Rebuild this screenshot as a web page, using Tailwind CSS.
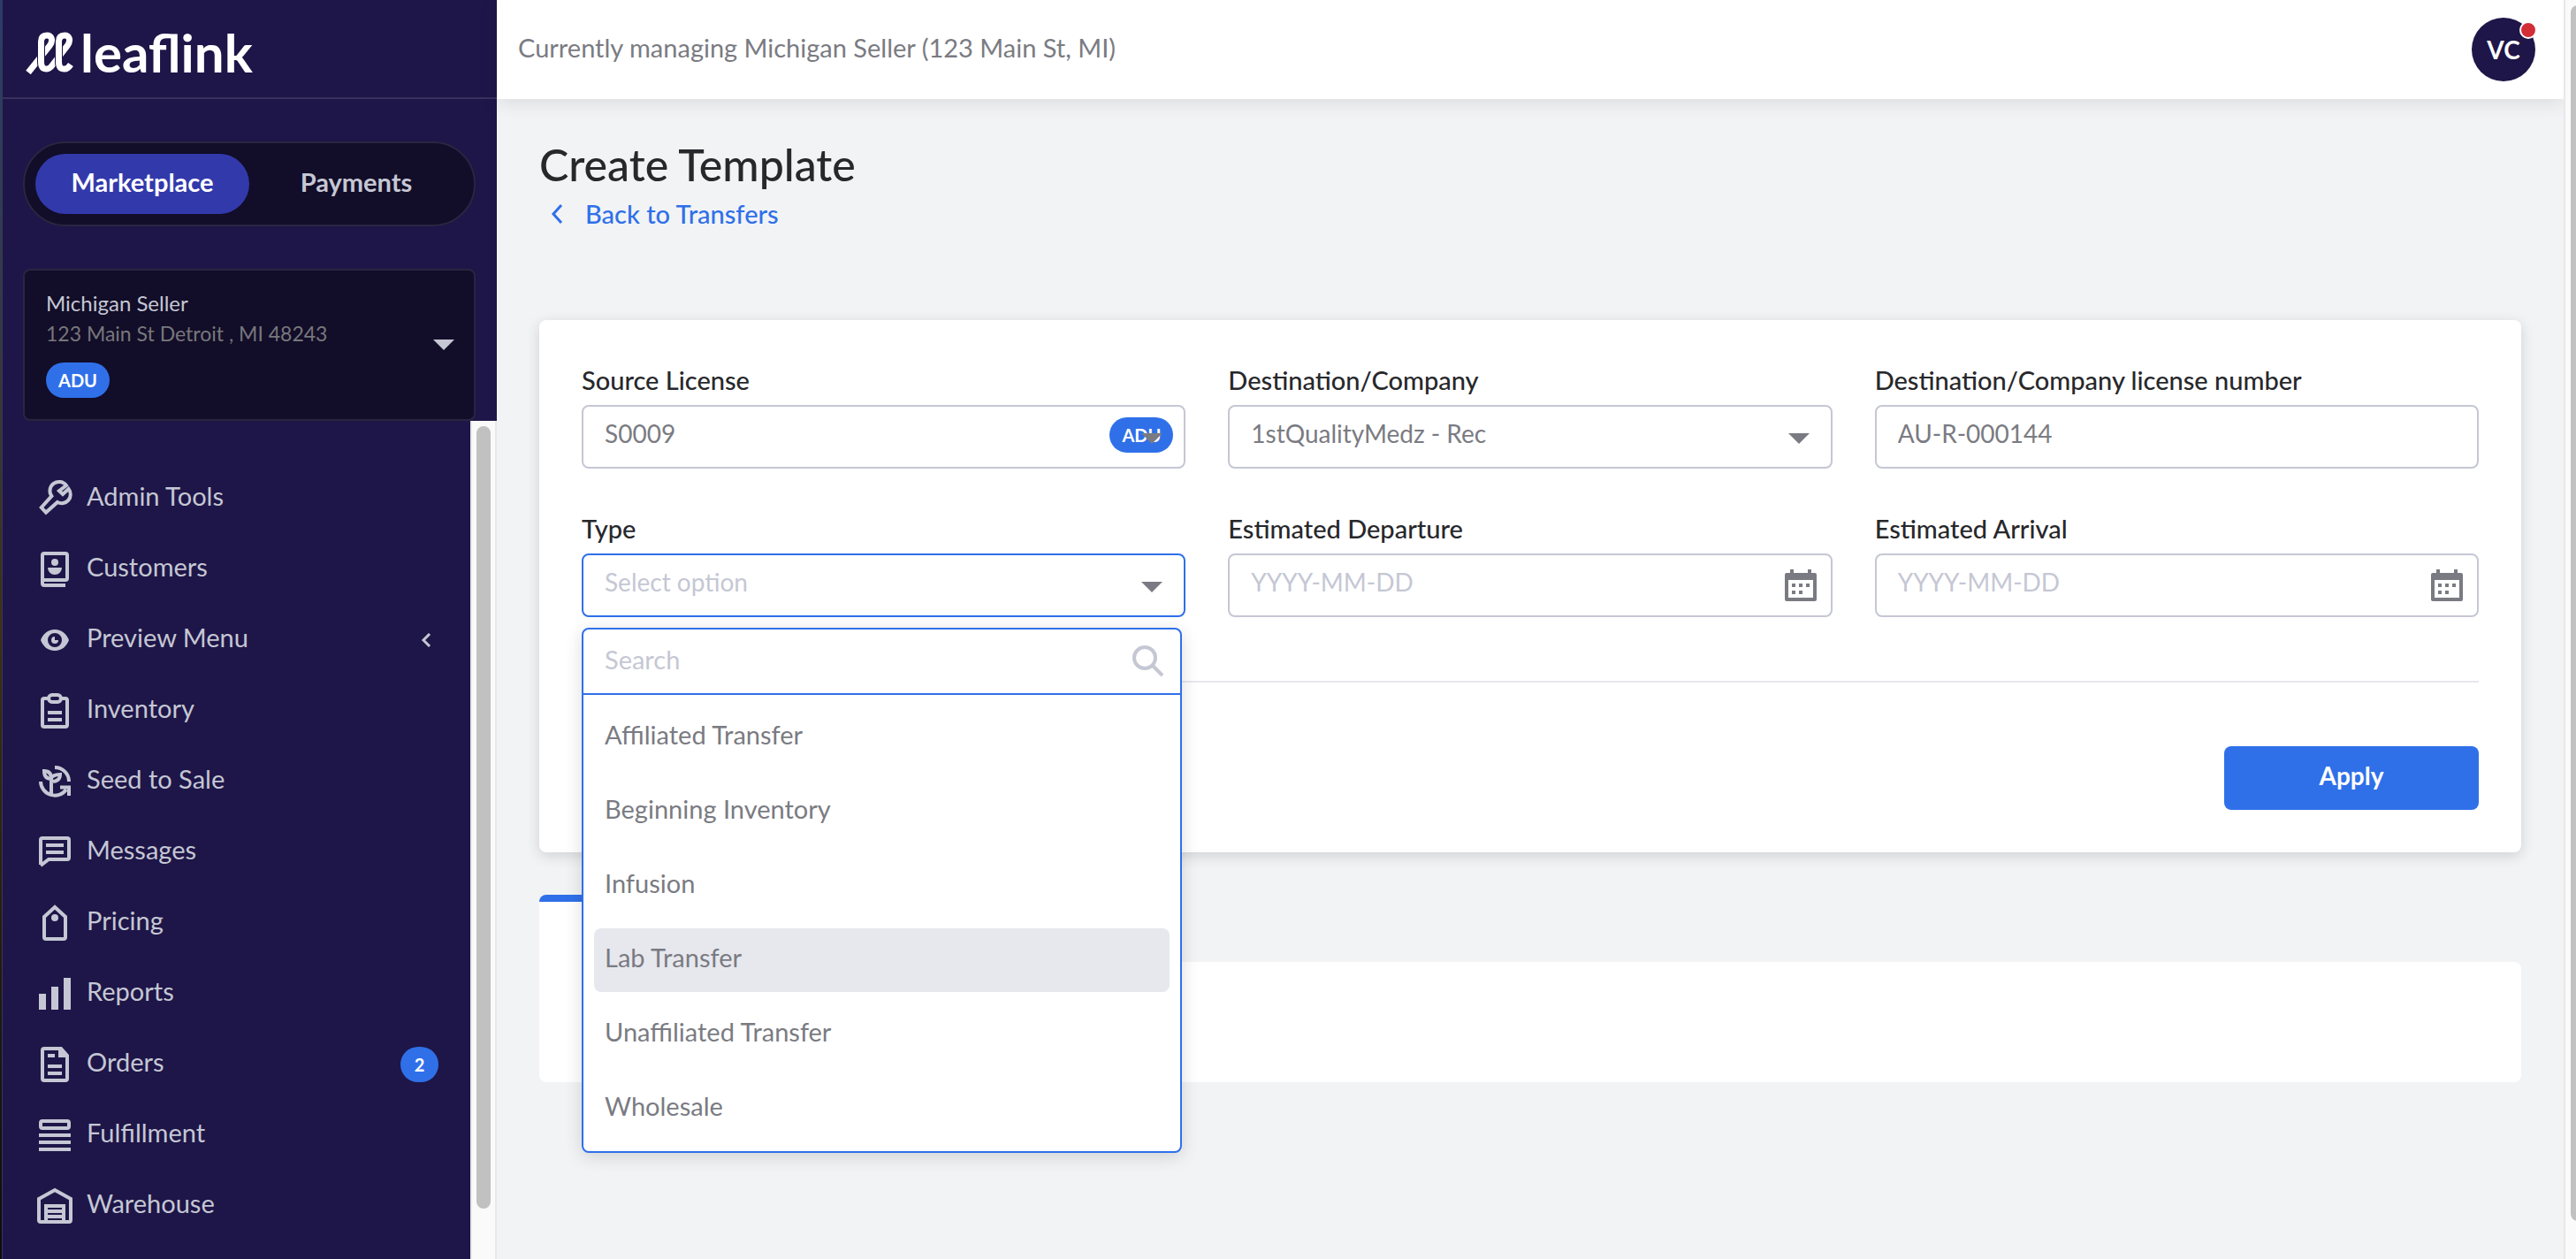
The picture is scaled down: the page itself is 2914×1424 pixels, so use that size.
<!DOCTYPE html>
<html lang="en">

<head>
  <meta charset="UTF-8">
  <meta name="viewport" content="width=device-width, initial-scale=1.0">
  <title>LeafLink - Create Template</title>
  <script src="https://cdn.jsdelivr.net/npm/@tailwindcss/browser@4"></script>
</head>

<body class="bg-[#f2f3f5] font-['Lato','Open_Sans',sans-serif] text-[29px] leading-10 text-[#27282b]">

  <div class="flex h-screen overflow-hidden">

    <!-- Sidebar -->
    <div class="w-0.5 shrink-0 bg-linear-to-b from-[#26406a] via-[#3d3010] to-[#0c0c0c]"></div>
    <aside class="flex w-[560px] shrink-0 flex-col border-l border-[#3a3560] bg-[#1e1648] text-[#c5c7d4]">
      <a href="#" class="flex h-28 items-center border-b-2 border-[#38305e] pt-2 pl-6 text-white">
        <svg class="h-[50px] w-[60px]" viewBox="28 35 60 50" fill="none" stroke="currentColor" stroke-width="7">
          <path d="M33 83 L57 53C62 46 59 41 54 41M54 79C57 79 58.500 77 60 75L77 53C82 46 79 41 74 41M74 79C77 79 79 77 81 74" />
          <path d="M54 41C49 41 47.500 44 47.500 48V71C47.500 77 50 79 54 79M74 41C69 41 67.500 44 67.500 48V71C67.500 77 70 79 74 79" stroke="#1e1648" stroke-width="9" />
          <path d="M54 41C49 41 47.500 44 47.500 48V71C47.500 77 50 79 54 79M74 41C69 41 67.500 44 67.500 48V71C67.500 77 70 79 74 79" />
        </svg>
        <span class="ml-1 text-[60px] leading-[60px] font-bold">leaflink</span>
      </a>

      <div class="pt-12 pr-6 pl-[23px]">
        <div class="flex h-24 rounded-full border-2 border-[#2a2540] bg-[#120d28] p-3 font-bold">
          <button class="w-[242px] rounded-full bg-[#3239ab] pb-1 text-white">Marketplace</button>
          <button class="flex-1 pb-1">Payments</button>
        </div>
        <button class="mt-12 flex h-[172px] w-full items-center rounded-lg border-2 border-[#2a2540] bg-[#120d28] px-6 text-left text-2xl leading-[34px]">
          <span class="flex-1 pb-1">
            <span class="block">Michigan Seller</span>
            <span class="block text-[23px] text-[#77777c]">123 Main St Detroit , MI 48243</span>
            <span class="mt-4 inline-block rounded-full bg-[#2f70e9] px-3.5 text-xl leading-10 font-bold text-white">ADU</span>
          </span>
          <svg class="-mr-0.5 h-3 w-6" viewBox="0 0 24 12" fill="currentColor"><path d="M0 0H24L12 12Z" /></svg>
        </button>
      </div>

      <div class="flex min-h-0 flex-1">
        <nav class="flex-1 overflow-hidden pt-12 pr-9 pl-[35px]">
          <a href="#" class="flex h-20 items-center">
            <svg class="h-12 w-12" viewBox="0 0 24 24" fill="none" stroke="currentColor" stroke-width="2"><path d="M18.500 4.600 A5 5 0 0 0 10.200 10.600 L4.400 17 L7 19.800 L13.500 14 A5 5 0 0 0 19.800 6.500 L16.500 9.500 L14.500 7.600 Z" /></svg>
            <span class="ml-3 pb-1.5">Admin Tools</span>
          </a>
          <a href="#" class="flex h-20 items-center">
            <svg class="h-12 w-12" viewBox="0 0 24 24" fill="none" stroke="currentColor" stroke-width="2"><rect x="5" y="3" width="14" height="15" rx="1" /><path d="M5 17V20Q5 21 6 21H18" /><circle cx="12" cy="8" r="2" fill="currentColor" stroke="none" /><path d="M8 11H16A4 4 0 0 1 8 11Z" fill="currentColor" stroke="none" /></svg>
            <span class="ml-3 pb-1.5">Customers</span>
          </a>
          <a href="#" class="flex h-20 items-center">
            <svg class="h-12 w-12" viewBox="0 0 24 24" fill="currentColor"><path fill-rule="evenodd" d="M12 6C8 6 5.300 8.500 4 12C5.300 15.500 8 18 12 18C16 18 18.700 15.500 20 12C18.700 8.500 16 6 12 6ZM12 8A4 4 0 1 1 12 16A4 4 0 1 1 12 8Z" /><path d="M12 10A2 2 0 1 0 14 12H12Z" /></svg>
            <span class="ml-3 flex-1 pb-1.5">Preview Menu</span>
            <svg class="mr-2 h-4 w-3" viewBox="0 0 12 16" fill="none" stroke="currentColor" stroke-width="3"><path d="M10 1L3 8L10 15" /></svg>
          </a>
          <a href="#" class="flex h-20 items-center">
            <svg class="h-12 w-12" viewBox="0 0 24 24" fill="none" stroke="currentColor" stroke-width="2"><path d="M8.500 5H6Q5 5 5 6V20Q5 21 6 21H18Q19 21 19 20V6Q19 5 18 5H15.500" /><rect x="8.500" y="3" width="7" height="4" rx="2" /><path d="M8 13H16M8 17H16" /></svg>
            <span class="ml-3 pb-1.5">Inventory</span>
          </a>
          <a href="#" class="flex h-20 items-center">
            <svg class="h-12 w-12" viewBox="0 0 24 24" fill="none" stroke="currentColor" stroke-width="2"><path d="M4 12A8 8 0 0 0 18.500 16.500M12 4A8 8 0 0 1 20 12M15 15.300H20V20" /><path d="M10 20V10.500C7 10.500 6 8.500 6 6C9 6 10 8 10 10.500C10 9 12 8 15 8C15 10.500 13.500 12 10 12" /></svg>
            <span class="ml-3 pb-1.5">Seed to Sale</span>
          </a>
          <a href="#" class="flex h-20 items-center">
            <svg class="h-12 w-12" viewBox="0 0 24 24" fill="none" stroke="currentColor" stroke-width="2"><path d="M4 19V5Q4 4 5 4H19Q20 4 20 5V15Q20 16 19 16H8.500L4 19.500M7 8H17M7 12H17" /></svg>
            <span class="ml-3 pb-1.5">Messages</span>
          </a>
          <a href="#" class="flex h-20 items-center">
            <svg class="h-12 w-12" viewBox="0 0 24 24" fill="none" stroke="currentColor" stroke-width="2"><path d="M6 8.500L12 3L18 8.500V20Q18 21 17 21H7Q6 21 6 20Z" /><circle cx="12" cy="9" r="2" fill="currentColor" stroke="none" /></svg>
            <span class="ml-3 pb-1.5">Pricing</span>
          </a>
          <a href="#" class="flex h-20 items-center">
            <svg class="h-12 w-12" viewBox="0 0 24 24" fill="currentColor"><path d="M3 12H7V21H3ZM10 8H14V21H10ZM17 3H21V21H17Z" /></svg>
            <span class="ml-3 pb-1.5">Reports</span>
          </a>
          <a href="#" class="flex h-20 items-center">
            <svg class="h-12 w-12" viewBox="0 0 24 24" fill="none" stroke="currentColor" stroke-width="2"><path d="M15.500 3H6Q5 3 5 4V20Q5 21 6 21H18Q19 21 19 20V7ZM8 7H12M8 13H16M8 17H16" /><path d="M14 3V8H19V7L16 3Z" fill="currentColor" stroke="none" /></svg>
            <span class="ml-3 flex-1 pb-1.5">Orders</span>
            <span class="h-10 w-[43px] rounded-full bg-[#2f70e9] text-center text-xl leading-10 font-bold text-white">2</span>
          </a>
          <a href="#" class="flex h-20 items-center">
            <svg class="h-12 w-12" viewBox="0 0 24 24" fill="none" stroke="currentColor" stroke-width="2"><rect x="4" y="4" width="16" height="4" rx="1" /><path d="M3 12H21M3 16H21M3 20H21" /></svg>
            <span class="ml-3 pb-1.5">Fulfillment</span>
          </a>
          <a href="#" class="flex h-20 items-center">
            <svg class="h-12 w-12" viewBox="0 0 24 24" fill="none" stroke="currentColor" stroke-width="2"><path d="M3 8L12 3L21 8V20Q21 21 20 21H4Q3 21 3 20Z" /><path d="M7 21V12H17V21M7 15H17M7 18H17" /></svg>
            <span class="ml-3 pb-1.5">Warehouse</span>
          </a>
        </nav>
        <div class="w-[30px] border-x-2 border-[#e8e8e8] bg-[#fafafa] px-[5px] pt-1.5">
          <div class="h-[94%] rounded-full bg-[#c1c1c1]"></div>
        </div>
      </div>
    </aside>

    <!-- Page -->
    <div class="flex min-w-0 flex-1 flex-col">
      <header class="flex h-28 shrink-0 items-center justify-between bg-white pr-8 pl-6 shadow-[0_4px_20px_rgba(0,0,0,0.1)]">
        <p class="pb-1 text-[#7a7b82]">Currently managing Michigan Seller (123 Main St, MI)</p>
        <button class="relative h-[72px] w-[72px] rounded-full bg-[#1e1648] text-[28px] font-bold text-white">VC
          <span class="absolute top-1 -right-0.5 h-5 w-5 rounded-full border-2 border-white bg-[#d32d37]"></span>
        </button>
      </header>

      <main class="px-12 pt-[42px]">
        <h1 class="text-[50px] leading-[64px] font-medium">Create Template</h1>
        <a href="#" class="mt-1 flex items-center pl-3 font-medium text-[#2f70e9]">
          <svg class="h-6 w-4" viewBox="0 0 16 24" fill="none" stroke="currentColor" stroke-width="3"><path d="M13 2L4 12L13 22" /></svg>
          <span class="ml-6">Back to Transfers</span>
        </a>

        <section class="relative z-10 mt-[100px] rounded-lg bg-white p-12 shadow-[0_4px_16px_rgba(0,0,0,0.14)]">
          <div class="grid grid-cols-3 gap-12">
            <div>
              <label for="source" class="mb-2 block font-medium">Source License</label>
              <div class="relative">
                <select id="source" class="h-[72px] w-full appearance-none rounded-lg border-2 border-[#c5c7d4] bg-white px-6 pb-2 text-[28px] text-[#7a7b82]">
                  <option>S0009</option>
                </select>
                <span class="absolute top-3.5 right-3.5 rounded-full bg-[#2f70e9] px-3.5 text-xl leading-10 font-bold text-white">ADU</span>
                <svg class="absolute top-8 right-[26px] h-3 w-6" viewBox="0 0 24 12" fill="#7a7b82"><path d="M0 0H24L12 12Z" /></svg>
              </div>
            </div>
            <div>
              <label for="destination" class="mb-2 block font-medium">Destination/Company</label>
              <div class="relative">
                <select id="destination" class="h-[72px] w-full appearance-none rounded-lg border-2 border-[#c5c7d4] bg-white px-6 pb-2 text-[28px] text-[#7a7b82]">
                  <option>1stQualityMedz - Rec</option>
                </select>
                <svg class="absolute top-8 right-[26px] h-3 w-6" viewBox="0 0 24 12" fill="#7a7b82"><path d="M0 0H24L12 12Z" /></svg>
              </div>
            </div>
            <div>
              <label for="license" class="mb-2 block font-medium">Destination/Company license number</label>
              <input id="license" type="text" value="AU-R-000144" class="block h-[72px] w-full rounded-lg border-2 border-[#c5c7d4] px-6 pb-2 text-[28px] text-[#7a7b82]">
            </div>
            <div>
              <label for="type" class="mb-2 block font-medium">Type</label>
              <div class="relative">
                <select id="type" class="h-[72px] w-full appearance-none rounded-lg border-2 border-[#2f70e9] bg-white px-6 pb-2 text-[28px] text-[#c5c7d4]">
                  <option>Select option</option>
                </select>
                <svg class="absolute top-8 right-[26px] h-3 w-6" viewBox="0 0 24 12" fill="#7a7b82"><path d="M0 0H24L12 12Z" /></svg>

                <!-- Open menu of the Type field -->
                <div class="absolute top-full right-1 left-0 mt-3 rounded-lg border-2 border-[#2f70e9] bg-white text-[#7a7b82] shadow-[0_4px_20px_rgba(0,0,0,0.14)]">
                  <div class="flex items-center border-b-2 border-[#2f70e9] pr-3.5">
                    <input type="text" aria-label="Search types" placeholder="Search" class="h-[72px] min-w-0 flex-1 px-6 pb-1.5 placeholder:text-[#c5c7d4] focus:outline-none">
                    <svg class="h-11 w-11" viewBox="0 0 44 44" fill="none" stroke="#c5c7d4" stroke-width="4"><circle cx="18" cy="18" r="12" /><path d="M27 27L38 38" /></svg>
                  </div>
                  <div class="flex flex-col gap-3 p-3">
                    <button class="h-[72px] rounded-lg px-3 pb-1.5 text-left">Affiliated Transfer</button>
                    <button class="h-[72px] rounded-lg px-3 pb-1.5 text-left">Beginning Inventory</button>
                    <button class="h-[72px] rounded-lg px-3 pb-1.5 text-left">Infusion</button>
                    <button class="h-[72px] rounded-lg bg-[#e7e8ee] px-3 pb-1.5 text-left">Lab Transfer</button>
                    <button class="h-[72px] rounded-lg px-3 pb-1.5 text-left">Unaffiliated Transfer</button>
                    <button class="h-[72px] rounded-lg px-3 pb-1.5 text-left">Wholesale</button>
                  </div>
                </div>
              </div>
            </div>
            <div>
              <label for="departure" class="mb-2 block font-medium">Estimated Departure</label>
              <div class="relative">
                <input id="departure" type="text" placeholder="YYYY-MM-DD" class="block h-[72px] w-full rounded-lg border-2 border-[#c5c7d4] px-6 pb-2 text-[28px] placeholder:text-[#c5c7d4]">
                <svg class="absolute top-3 right-3 h-12 w-12" viewBox="0 0 24 24" fill="#7a7b82"><path fill-rule="evenodd" d="M6 3H8V5H16V3H18V5H20Q21 5 21 6V20Q21 21 20 21H4Q3 21 3 20V6Q3 5 4 5H6ZM5 9V19H19V9Z" /><path d="M7 11H9V13H7ZM11 11H13V13H11ZM15 11H17V13H15ZM7 15H9V17H7ZM11 15H13V17H11Z" /></svg>
              </div>
            </div>
            <div>
              <label for="arrival" class="mb-2 block font-medium">Estimated Arrival</label>
              <div class="relative">
                <input id="arrival" type="text" placeholder="YYYY-MM-DD" class="block h-[72px] w-full rounded-lg border-2 border-[#c5c7d4] px-6 pb-2 text-[28px] placeholder:text-[#c5c7d4]">
                <svg class="absolute top-3 right-3 h-12 w-12" viewBox="0 0 24 24" fill="#7a7b82"><path fill-rule="evenodd" d="M6 3H8V5H16V3H18V5H20Q21 5 21 6V20Q21 21 20 21H4Q3 21 3 20V6Q3 5 4 5H6ZM5 9V19H19V9Z" /><path d="M7 11H9V13H7ZM11 11H13V13H11ZM15 11H17V13H15ZM7 15H9V17H7ZM11 15H13V17H11Z" /></svg>
              </div>
            </div>
          </div>
          <div class="mt-[72px] flex justify-end border-t-2 border-[#e7e8ee] pt-[72px]">
            <button class="h-[72px] w-72 rounded-lg bg-[#2f70e9] pb-1.5 text-[28px] font-bold text-white">Apply</button>
          </div>
        </section>

        <div class="mt-12">
          <div class="h-[76px] w-72 rounded-t-lg border-t-8 border-[#2f70e9] bg-white"></div>
          <div class="h-[136px] rounded-r-lg rounded-b-lg bg-white"></div>
        </div>
      </main>
    </div>

    <!-- Page scrollbar -->
    <div class="w-3.5 shrink-0 overflow-hidden border-l-2 border-[#e8e8e8] bg-[#fafafa] pt-1.5 pl-1.5">
      <div class="h-[97%] w-4 rounded-full bg-[#c1c1c1]"></div>
    </div>
  </div>

</body>

</html>
